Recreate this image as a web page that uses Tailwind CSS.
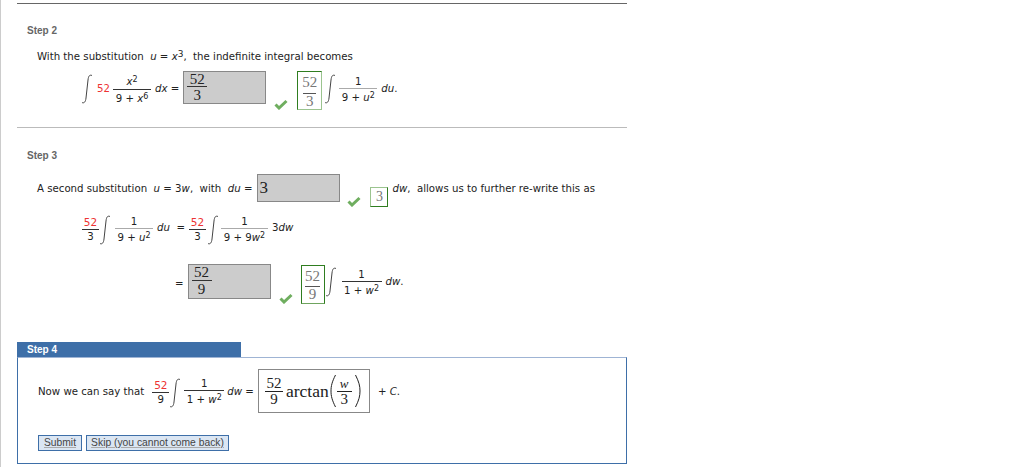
<!DOCTYPE html>
<html lang="en">
<head>
<meta charset="UTF-8">
<title>Step 4</title>
<script src="https://cdn.jsdelivr.net/npm/@tailwindcss/browser@4"></script>
</head>
<body class="bg-white text-[#222] h-[467px] overflow-hidden border-l border-[#ccc] font-['DejaVu_Sans',sans-serif] text-[10.2px] leading-[14px]">
<div class="ml-[16px] w-[610px]">
  <div class="h-px mt-[3px] bg-[#666]"></div>

  <!-- step 2 -->
  <div class="h-[14px] mt-[20px] pl-[10px] font-bold text-[#666] font-['Liberation_Sans',sans-serif] text-[10px]">Step 2</div>
  <div class="h-[14px] mt-[12px] pl-[20px] flex items-center whitespace-pre">With the substitution  <i>u</i> = <i>x</i><sup class="text-[9px] -top-[3px]">3</sup>,  the indefinite integral becomes</div>
  <div class="h-[40px] mt-[6px] flex items-start">
    <svg class="ml-[64px] mt-[4px] w-[12px] h-[30px]" viewBox="0 0 12 30" fill="none" stroke="#444" stroke-width="1"><path d="M11 1.5C8.500 0.500 7.500 2 7 6L5 24C4.600 28 3 29.500 1 28.500"/></svg>
    <span class="ml-[4px] mt-[12px] text-[#e33]">52</span>
    <div class="ml-[3px] mt-[6px] w-[38px] flex flex-col items-center leading-[12px]"><span class="h-[13px]"><i>x</i><sup class="text-[8px] -top-[3px]">2</sup></span><span class="w-full h-px bg-[#333]"></span><span class="mt-[3px] whitespace-pre">9 + <i>x</i><sup class="text-[8px] -top-[3px]">6</sup></span></div>
    <span class="ml-[4px] mt-[12px] whitespace-pre"><i>dx</i> =</span>
    <div class="ml-[4px] mt-[1px] w-[83px] h-[33px] bg-[#ccc] border border-[#888] pl-[3px] flex">
      <div class="w-[20px] pt-[1px] flex flex-col items-center font-['Liberation_Serif',serif] text-[15px] leading-[13px] text-[#222]"><span>52</span><span class="w-full h-px bg-[#333]"></span><span class="mt-[2px]">3</span></div>
    </div>
    <svg class="ml-[8px] mt-[29px] w-[14px] h-[11px]" viewBox="0 0 14 11" fill="none" stroke="#6fae5f" stroke-width="3"><path d="M1.500 5.500L5 9L12.500 2"/></svg>
    <div class="ml-[9px] mt-[1px] w-[25px] h-[39px] border border-t-[#2f7d20] border-l-[#2f7d20] border-r-[#9bc48f] border-b-[#9bc48f] flex flex-col items-center pt-[4px] font-['Liberation_Serif',serif] text-[15px] leading-[13px] text-[#777]"><span>52</span><span class="w-[13px] h-px mt-[4px] bg-[#555]"></span><span class="mt-[1px]">3</span></div>
    <svg class="ml-[2px] mt-[4px] w-[12px] h-[30px]" viewBox="0 0 12 30" fill="none" stroke="#444" stroke-width="1"><path d="M11 1.500C8.500 0.500 7.500 2 7 6L5 24C4.600 28 3 29.500 1 28.500"/></svg>
    <div class="ml-[3px] mt-[6px] w-[38px] flex flex-col items-center leading-[12px]"><span class="h-[12px]">1</span><span class="w-full h-px bg-[#aaa]"></span><span class="mt-[3px] whitespace-pre">9 + <i>u</i><sup class="text-[8px] -top-[3px]">2</sup></span></div>
    <span class="ml-[4px] mt-[12px]"><i>du</i>.</span>
  </div>
  <div class="h-px mt-[17px] bg-[#bbb]"></div>

  <!-- step 3 -->
  <div class="h-[14px] mt-[21px] pl-[10px] font-bold text-[#666] font-['Liberation_Sans',sans-serif] text-[10px]">Step 3</div>
  <div class="h-[34px] mt-[11px] flex items-start whitespace-pre">
    <span class="ml-[20px] mt-[8px]">A second substitution  <i>u</i> = 3<i>w</i>,  with  <i>du</i> =</span>
    <div class="ml-[5px] w-[83px] h-[28px] bg-[#ccc] border border-[#888] pl-[1px] font-['Liberation_Serif',serif] text-[17px] leading-[25px] text-[#222]">3</div>
    <svg class="ml-[7px] mt-[22px] w-[14px] h-[11px]" viewBox="0 0 14 11" fill="none" stroke="#6fae5f" stroke-width="3"><path d="M1.500 5.500L5 9L12.500 2"/></svg>
    <div class="ml-[9px] mt-[13px] w-[18px] h-[20px] border border-t-[#9bc48f] border-l-[#9bc48f] border-r-[#2f7d20] border-b-[#2f7d20] flex items-center justify-center font-['Liberation_Serif',serif] text-[14px] text-[#777]">3</div>
    <span class="ml-[4px] mt-[8px]"><i>dw</i>,  allows us to further re-write this as</span>
  </div>
  <div class="h-[34px] mt-[5px] flex items-start">
    <div class="ml-[65px] mt-[3px] w-[17px] flex flex-col items-center leading-[13px]"><span class="text-[#e33] text-[10.5px]">52</span><span class="w-full h-px bg-[#333]"></span><span>3</span></div>
    <svg class="mt-[2px] w-[12px] h-[30px]" viewBox="0 0 12 30" fill="none" stroke="#444" stroke-width="1"><path d="M11 1.500C8.500 0.500 7.500 2 7 6L5 24C4.600 28 3 29.500 1 28.500"/></svg>
    <div class="ml-[4px] mt-[3px] w-[38px] flex flex-col items-center leading-[12px]"><span class="h-[12px]">1</span><span class="w-full h-px bg-[#aaa]"></span><span class="mt-[3px] whitespace-pre">9 + <i>u</i><sup class="text-[8px] -top-[3px]">2</sup></span></div>
    <span class="ml-[4px] mt-[8px] whitespace-pre"><i>du</i>  =</span>
    <div class="ml-[4px] mt-[3px] w-[17px] flex flex-col items-center leading-[13px]"><span class="text-[#e33] text-[10.5px]">52</span><span class="w-full h-px bg-[#333]"></span><span>3</span></div>
    <svg class="ml-[1px] mt-[2px] w-[12px] h-[30px]" viewBox="0 0 12 30" fill="none" stroke="#444" stroke-width="1"><path d="M11 1.500C8.500 0.500 7.500 2 7 6L5 24C4.600 28 3 29.500 1 28.500"/></svg>
    <div class="ml-[2px] mt-[3px] w-[47px] flex flex-col items-center leading-[12px]"><span class="h-[12px]">1</span><span class="w-full h-px bg-[#aaa]"></span><span class="mt-[3px] whitespace-pre">9 + 9<i>w</i><sup class="text-[8px] -top-[3px]">2</sup></span></div>
    <span class="ml-[4px] mt-[8px]">3<i>dw</i></span>
  </div>
  <div class="h-[40px] mt-[17px] flex items-start">
    <span class="ml-[158px] mt-[13px]">=</span>
    <div class="ml-[4px] w-[83px] h-[35px] bg-[#ccc] border border-[#888] pl-[3px] flex">
      <div class="w-[20px] pt-[1px] flex flex-col items-center font-['Liberation_Serif',serif] text-[15px] leading-[13px] text-[#222]"><span>52</span><span class="w-full h-px mt-[1px] bg-[#333]"></span><span class="mt-[2px]">9</span></div>
    </div>
    <svg class="ml-[8px] mt-[29px] w-[14px] h-[11px]" viewBox="0 0 14 11" fill="none" stroke="#6fae5f" stroke-width="3"><path d="M1.500 5.500L5 9L12.500 2"/></svg>
    <div class="ml-[8px] mt-[1px] w-[24px] h-[39px] border border-t-[#2f7d20] border-l-[#2f7d20] border-r-[#2f7d20] border-b-[#6fa45f] flex flex-col items-center pt-[4px] font-['Liberation_Serif',serif] text-[15px] leading-[13px] text-[#777]"><span>52</span><span class="w-[15px] h-px mt-[3px] bg-[#555]"></span><span class="mt-[1px]">9</span></div>
    <svg class="mt-[3px] w-[12px] h-[30px]" viewBox="0 0 12 30" fill="none" stroke="#444" stroke-width="1"><path d="M11 1.500C8.500 0.500 7.500 2 7 6L5 24C4.600 28 3 29.500 1 28.500"/></svg>
    <div class="ml-[5px] mt-[5px] w-[40px] flex flex-col items-center leading-[12px]"><span class="h-[12px]">1</span><span class="w-full h-px bg-[#333]"></span><span class="mt-[3px] whitespace-pre">1 + <i>w</i><sup class="text-[8px] -top-[3px]">2</sup></span></div>
    <span class="ml-[4px] mt-[11px]"><i>dw</i>.</span>
  </div>

  <!-- step 4 -->
  <div class="w-[224px] h-[15px] mt-[38px] bg-[#3e6fa8] pl-[10px] font-bold text-white font-['Liberation_Sans',sans-serif] text-[10px] leading-[15px]">Step 4</div>
  <div class="h-[107px] border border-[#3e6fa8] border-t-[#9fb4d4] pl-[20px]">
    <div class="h-[44px] mt-[11px] flex items-start whitespace-pre">
      <span class="mt-[16px]">Now we can say that</span>
      <div class="ml-[8px] mt-[10px] w-[17px] flex flex-col items-center leading-[13px]"><span class="text-[#e33] text-[10.5px]">52</span><span class="w-full h-px bg-[#333]"></span><span>9</span></div>
      <svg class="mt-[9px] w-[12px] h-[30px]" viewBox="0 0 12 30" fill="none" stroke="#444" stroke-width="1"><path d="M11 1.500C8.500 0.500 7.500 2 7 6L5 24C4.600 28 3 29.500 1 28.500"/></svg>
      <div class="ml-[3px] mt-[9px] w-[40px] flex flex-col items-center leading-[12px]"><span class="h-[12px]">1</span><span class="w-full h-px bg-[#333]"></span><span class="mt-[3px]">1 + <i>w</i><sup class="text-[8px] -top-[3px]">2</sup></span></div>
      <span class="ml-[3px] mt-[16px]"><i>dw</i> =</span>
      <div class="ml-[4px] w-[112px] h-[44px] border border-[#888] flex items-center pl-[6px] font-['Liberation_Serif',serif] text-[15px] leading-[15px] text-[#222]">
        <div class="w-[18px] flex flex-col items-center"><span>52</span><span class="w-full h-px bg-[#222]"></span><span>9</span></div>
        <span class="ml-[3px] text-[17.500px]">arctan</span>
        <svg class="ml-[1px] w-[6px] h-[34px]" viewBox="0 0 6 34" fill="none" stroke="#222"><path d="M5.500 1C2 8 1 12 1 17S2 26 5.500 33"/></svg>
        <div class="ml-[1px] w-[15px] flex flex-col items-center"><i class="text-[13px]">w</i><span class="w-full h-px bg-[#222]"></span><span>3</span></div>
        <svg class="ml-[3px] w-[6px] h-[34px]" viewBox="0 0 6 34" fill="none" stroke="#222"><path d="M0.500 1C4 8 5 12 5 17S4 26 0.500 33"/></svg>
      </div>
      <span class="ml-[8px] mt-[16px]">+ <i>C</i>.</span>
    </div>
    <div class="mt-[22px] flex gap-[4px] font-['Liberation_Sans',sans-serif] text-[10.300px] text-[#444]">
      <button class="w-[44px] h-[16px] bg-[#dbe6f3] border border-[#3e6fa8] leading-[14px] underline decoration-[#aaa]">Submit</button>
      <button class="w-[143px] h-[16px] bg-[#dbe6f3] border border-[#3e6fa8] leading-[14px] underline decoration-[#aaa]">Skip (you cannot come back)</button>
    </div>
  </div>
</div>
</body>
</html>
